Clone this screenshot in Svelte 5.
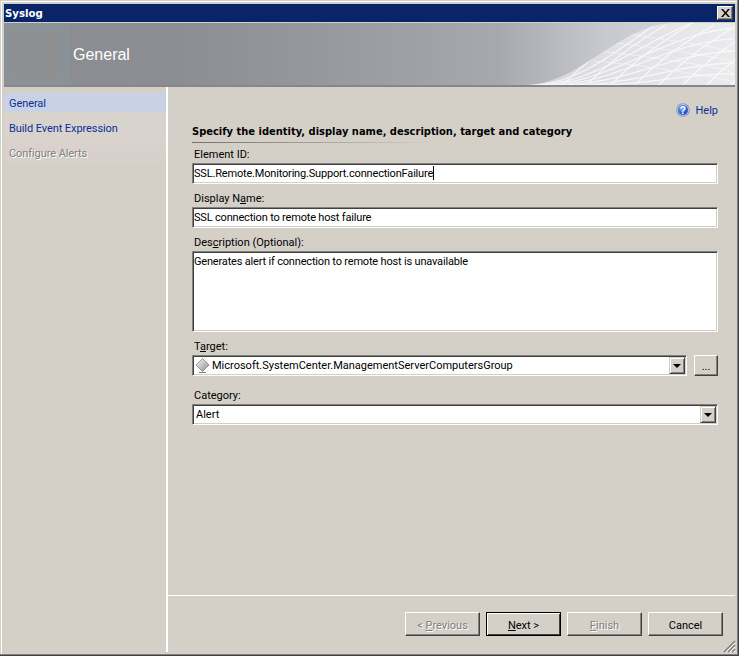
<script>
    const navItems = [
        { label: "General", state: "active" },
        { label: "Build Event Expression", state: "link" },
        { label: "Configure Alerts", state: "disabled" },
    ];

    const bannerW = 731;
    const bannerH = 62;

    function curve(fn, from, to, step) {
        let d = "";
        for (let a = from; a <= to + 0.01; a += step) {
            const [x, y] = fn(a);
            d += (d ? "L" : "M") + x.toFixed(1) + " " + y.toFixed(1);
        }
        return d;
    }

    // one contour of the mesh: leaves the bottom edge at sx, levels off at endY
    function contour(sx, length, endY) {
        return (x) => {
            const t = Math.min(1, Math.max(0, (x - sx) / length));
            const c = Math.cos((t * Math.PI) / 2);
            return [x, endY + (bannerH - endY) * c * c];
        };
    }

    const fillPath =
        curve(contour(521, 150, 0), 521, bannerW, 5) +
        `L${bannerW} ${bannerH}L521 ${bannerH}Z`;

    const rows = [
        [526, 215, -34],
        [530, 215, -12],
        [535, 205, 5],
        [545, 190, 16],
        [556, 180, 28],
        [570, 165, 40],
        [590, 140, 51],
    ].map(([sx, len, endY]) => curve(contour(sx, len, endY), sx, bannerW, 5));

    // the other two directions of the net
    const cols = [];
    for (let c = 535; c < 800; c += 24) {
        cols.push(curve((t) => [c + t * 0.75 + 0.004 * t * t, bannerH - t * 0.8], 0, 75, 5));
    }
    const falls = [];
    for (let i = 0; i < 4; i++) {
        const y0 = 8 + i * 10;
        falls.push(curve((x) => [x, y0 + (x - 590) * 0.09 + 0.0004 * (x - 590) * (x - 590)], 590, bannerW, 8));
    }
</script>

<div class="window">
    <div class="titlebar">
        <span class="title">Syslog</span>
        <button class="close" aria-label="Close">
            <svg width="9" height="8" viewBox="0 0 9 8">
                <path d="M0 0h2l2.500 3 2.500-3h2L5.500 4 9 8H7L4.500 5 2 8H0l3.500-4z" fill="#000" />
            </svg>
        </button>
    </div>

    <div class="banner">
        <div class="logo-box"><div class="logo-inner"></div></div>
        <h1>General</h1>
        <svg class="mesh" width={bannerW} height={bannerH} viewBox="0 0 {bannerW} {bannerH}">
            <clipPath id="meshclip"><path d={fillPath} /></clipPath>
            <path d={fillPath} fill="#fff" opacity="0.42" />
            <g clip-path="url(#meshclip)" fill="none" stroke="#fff" stroke-width="1.3" opacity="0.7">
                {#each rows as d}
                    <path {d} />
                {/each}
                {#each cols as d}
                    <path {d} />
                {/each}
                {#each falls as d}
                    <path {d} stroke-width="1" opacity="0.7" />
                {/each}
            </g>
        </svg>
    </div>

    <div class="body">
        <nav>
            {#each navItems as item}
                <div class="nav-item {item.state}">{item.label}</div>
            {/each}
        </nav>

        <main>
            <div class="content">
                <div class="help">
                    <svg width="14" height="14" viewBox="0 0 15 15">
                        <defs>
                            <radialGradient id="helpfill" cx="0.4" cy="0.35" r="0.7">
                                <stop offset="0" stop-color="#8fb4ee" />
                                <stop offset="0.6" stop-color="#2a5fcf" />
                                <stop offset="1" stop-color="#1a3f9f" />
                            </radialGradient>
                        </defs>
                        <circle cx="7.500" cy="7.500" r="7.300" fill="#7d93cc" />
                        <circle cx="7.500" cy="7.500" r="5.800" fill="url(#helpfill)" stroke="#dfe7f7" stroke-width="0.8" />
                        <text x="7.500" y="11.500" text-anchor="middle" class="help-mark">?</text>
                    </svg>
                    <span>Help</span>
                </div>

                <div class="heading">Specify the identity, display name, description, target and category</div>

                <div class="field">
                    <div class="label">Element ID:</div>
                    <div class="box text">SSL.Remote.Monitoring.Support.connectionFailure<i class="caret"></i></div>
                </div>

                <div class="field">
                    <div class="label">Display N<u>a</u>me:</div>
                    <div class="box text">SSL connection to remote host failure</div>
                </div>

                <div class="field">
                    <div class="label">Des<u>c</u>ription (Optional):</div>
                    <div class="box text area">Generates alert if connection to remote host is unavailable</div>
                </div>

                <div class="field target">
                    <div class="label">T<u>a</u>rget:</div>
                    <div class="combo-row">
                        <div class="box combo">
                            <svg width="15" height="15" viewBox="0 0 15 15">
                                <defs>
                                    <linearGradient id="gem" x1="0" y1="0" x2="1" y2="1">
                                        <stop offset="0" stop-color="#fafafa" />
                                        <stop offset="1" stop-color="#8a8a8a" />
                                    </linearGradient>
                                </defs>
                                <path d="M7.500 0.500 14 7 7.500 13.500 1 7z" fill="url(#gem)" stroke="#777" stroke-width="0.7" />
                                <path d="M4 14.500h7" stroke="#6f8a55" />
                            </svg>
                            <span>Microsoft.SystemCenter.ManagementServerComputersGroup</span>
                            <div class="drop"><i class="arrow"></i></div>
                        </div>
                        <button class="btn browse">...</button>
                    </div>
                </div>

                <div class="field">
                    <div class="label">Category:</div>
                    <div class="box combo plain">
                        <span>Alert</span>
                        <div class="drop"><i class="arrow"></i></div>
                    </div>
                </div>
            </div>

            <footer>
                <button class="btn off">&lt; <u>P</u>revious</button>
                <button class="btn primary"><u>N</u>ext &gt;</button>
                <button class="btn off"><u>F</u>inish</button>
                <button class="btn">Cancel</button>
            </footer>
        </main>
    </div>

    <svg class="grip" width="13" height="13" viewBox="0 0 13 13">
        <path d="M12 1 1 12M12 5 5 12M12 9 9 12" stroke="#808080" stroke-width="1.500" fill="none" />
        <path d="M12 3 3 12M12 7 7 12M12 11 11 12" stroke="#fff" stroke-width="1" fill="none" />
    </svg>
</div>

<style>
    :global(body) {
        margin: 0;
        background: #d4d0c8;
    }

    .window {
        position: relative;
        width: 739px;
        height: 656px;
        box-sizing: border-box;
        padding: 4px;
        display: flex;
        flex-direction: column;
        background: #d4d0c8;
        box-shadow:
            inset -1px -1px 0 #404040,
            inset -2px -2px 0 #808080,
            inset 1px 1px 0 #d4d0c8,
            inset 2px 2px 0 #fff;
        font-family: Roboto, "Liberation Sans", Arial, sans-serif;
        font-size: 11px;
        color: #000;
    }

    .titlebar {
        height: 18px;
        flex: none;
        display: flex;
        align-items: center;
        justify-content: space-between;
        padding: 0 2px 0 1px;
        background: #0a246a;
        border-bottom: 1px solid #d4d0c8;
    }

    .title {
        color: #fff;
        font-family: "DejaVu Sans", sans-serif;
        font-weight: bold;
        font-size: 10.2px;
    }

    .close {
        width: 16px;
        height: 14px;
        padding: 0;
        display: flex;
        align-items: center;
        justify-content: center;
        background: #d4d0c8;
        border: 1px solid;
        border-color: #fff #404040 #404040 #fff;
        box-shadow: inset -1px -1px 0 #808080;
    }

    .banner {
        position: relative;
        height: 62px;
        flex: none;
        display: flex;
        align-items: center;
        overflow: hidden;
        background: linear-gradient(90deg, #8b8c90 0%, #8d8e93 25%, #9b9ca4 50%, #a8a9ae 68%, #c8c9cf 82%, #dcdde2 100%);
        border-bottom: 2px solid #85878a;
    }

    .logo-box {
        width: 67px;
        height: 62px;
        flex: none;
        box-sizing: border-box;
        padding: 8px;
        background: #8b9297;
    }

    .logo-inner {
        width: 48px;
        height: 47px;
        background: #8e8f91;
    }

    h1 {
        margin: 0 0 0 2px;
        padding-top: 2px;
        color: #fff;
        font-family: "Liberation Sans", Arial, sans-serif;
        font-weight: normal;
        font-size: 16px;
        z-index: 1;
    }

    .mesh {
        position: absolute;
        left: 0;
        top: 0;
    }

    .body {
        flex: 1;
        display: flex;
        min-height: 0;
    }

    nav {
        width: 162px;
        flex: none;
        padding-top: 6px;
        border-right: 2px solid #fff;
    }

    .nav-item {
        height: 25px;
        box-sizing: border-box;
        padding-top: 1px;
        padding-left: 5px;
        display: flex;
        align-items: center;
        color: #0b2f9c;
        background: #d9d3cd;
        letter-spacing: -0.08px;
    }

    .nav-item.active {
        height: 19px;
        background: #c8d2e4;
    }

    .nav-item.link {
        height: 28px;
        padding-top: 5px;
    }

    .nav-item.disabled {
        padding-top: 2px;
        color: #808080;
        text-shadow: 1px 1px 0 #fff;
        background: linear-gradient(180deg, #dbd2cd, #d4d0c8);
    }

    main {
        flex: 1;
        min-width: 0;
        display: flex;
        flex-direction: column;
    }

    .content {
        flex: 1;
        padding: 15px 17px 0 24px;
    }

    .help {
        height: 16px;
        display: flex;
        align-items: center;
        justify-content: flex-end;
        gap: 5px;
        color: #0b2f9c;
    }

    .help-mark {
        fill: #fff;
        font-family: "Liberation Sans", Arial, sans-serif;
        font-weight: bold;
        font-size: 11px;
    }

    .heading {
        margin-top: 5px;
        height: 19px;
        line-height: 17px;
        font-family: "DejaVu Sans", sans-serif;
        font-weight: bold;
        font-size: 9.93px;
        border-bottom: 1px solid;
        border-image: linear-gradient(90deg, #707070, #d4d0c8 46%) 1;
        margin-bottom: 3px;
    }

    .label {
        height: 17px;
        line-height: 17px;
        padding-left: 2px;
    }

    .field {
        margin-bottom: 6px;
    }

    .field.target {
        margin-bottom: 11px;
    }

    .box {
        box-sizing: border-box;
        height: 21px;
        background: #fff;
        border: 1px solid;
        border-color: #808080 #fff #fff #808080;
        box-shadow:
            inset 1px 1px 0 #404040,
            inset -1px -1px 0 #d4d0c8;
    }

    .text {
        padding: 2px 2px 0 1px;
        line-height: 15px;
        white-space: nowrap;
        letter-spacing: -0.18px;
    }

    .area {
        height: 81px;
    }

    .caret {
        display: inline-block;
        width: 1px;
        height: 14px;
        background: #000;
        vertical-align: top;
    }

    .combo-row {
        display: flex;
        gap: 7px;
    }

    .combo {
        flex: 1;
        display: flex;
        align-items: center;
        gap: 2px;
        padding: 0 1px 0 2px;
    }

    .combo.plain {
        padding-left: 3px;
    }

    .combo span {
        flex: 1;
    }

    .drop {
        width: 16px;
        height: 17px;
        box-sizing: border-box;
        display: flex;
        align-items: center;
        justify-content: center;
        background: #d4d0c8;
        border: 1px solid;
        border-color: #d4d0c8 #404040 #404040 #d4d0c8;
        box-shadow:
            inset 1px 1px 0 #fff,
            inset -1px -1px 0 #808080;
    }

    .arrow {
        width: 0;
        height: 0;
        border: 4px solid transparent;
        border-top-color: #000;
        border-bottom: 0;
    }

    .btn {
        width: 75px;
        height: 24px;
        padding: 2px 0 0;
        font: inherit;
        color: #000;
        background: #d4d0c8;
        border: 1px solid;
        border-color: #fff #404040 #404040 #fff;
        box-shadow: inset -1px -1px 0 #808080;
    }

    .browse {
        width: 24px;
        height: 21px;
        flex: none;
    }

    .btn.off {
        color: #808080;
        text-shadow: 1px 1px 0 #fff;
    }

    .btn.primary {
        border-color: #000;
        box-shadow:
            inset 1px 1px 0 #fff,
            inset -1px -1px 0 #404040;
    }

    footer {
        display: flex;
        justify-content: flex-end;
        gap: 6px;
        padding: 16px 12px 16px 0;
        border-top: 1px solid #fff;
    }

    .grip {
        position: absolute;
        right: 3px;
        bottom: 3px;
    }
</style>
